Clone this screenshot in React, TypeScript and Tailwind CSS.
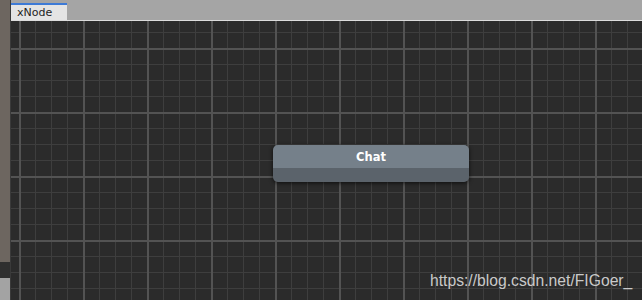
import React from "react";

export default function App() {
  return (
    <div className="w-[642px] h-[300px] flex overflow-hidden bg-[#2b2b2b]">
      <div className="w-[10px] h-full flex flex-col shrink-0">
        <div className="h-[262px] bg-[#6d6660]" />
        <div className="h-[16px] bg-[#2f2f2f]" />
        <div className="flex-1 bg-[#a3a3a3]" />
      </div>
      <div className="w-[1px] h-full bg-[#3a3a3a] shrink-0" />
      <div className="flex-1 flex flex-col">
        <div className="h-[20px] bg-[#a5a5a5] flex items-end shrink-0">
          <div className="w-[56px] h-[17px] bg-[#e4e4e4] border-t-2 border-[#3d7ad6] flex items-center pl-[6px]">
            <span className="text-[11px] leading-none text-[#1e1e1e] font-['DejaVu_Sans',sans-serif]">xNode</span>
          </div>
        </div>
        <div className="h-[1px] bg-[#dcdcdc] shrink-0" />
        <div className="relative flex-1 bg-[#2b2b2b] bg-[linear-gradient(to_right,#535353_2px,transparent_2px),linear-gradient(to_bottom,#535353_2px,transparent_2px),linear-gradient(to_right,#3e3e3e_1px,transparent_1px),linear-gradient(to_bottom,#3e3e3e_1px,transparent_1px)] bg-[size:64px_64px,64px_64px,16px_16px,16px_16px] bg-[position:8px_27px,8px_27px,8px_11px,8px_11px]">
          <div className="absolute left-[262px] top-[124px] w-[196px] h-[37px] rounded-[5px] overflow-hidden flex flex-col shadow-[0_1px_4px_rgba(0,0,0,0.7)]">
            <div className="h-[23px] bg-[#75808a] flex items-center justify-center pt-[2px]">
              <span className="text-[11.5px] font-bold text-white leading-none font-['DejaVu_Sans',sans-serif]">Chat</span>
            </div>
            <div className="flex-1 bg-[#5b636b]" />
          </div>
          <div className="absolute left-[419px] top-[250px] text-[15.7px] leading-[20px] text-[#c9c9c9] font-['Liberation_Sans',Arial,sans-serif] whitespace-nowrap">
            https://blog.csdn.net/FIGoer_
          </div>
        </div>
      </div>
    </div>
  );
}
